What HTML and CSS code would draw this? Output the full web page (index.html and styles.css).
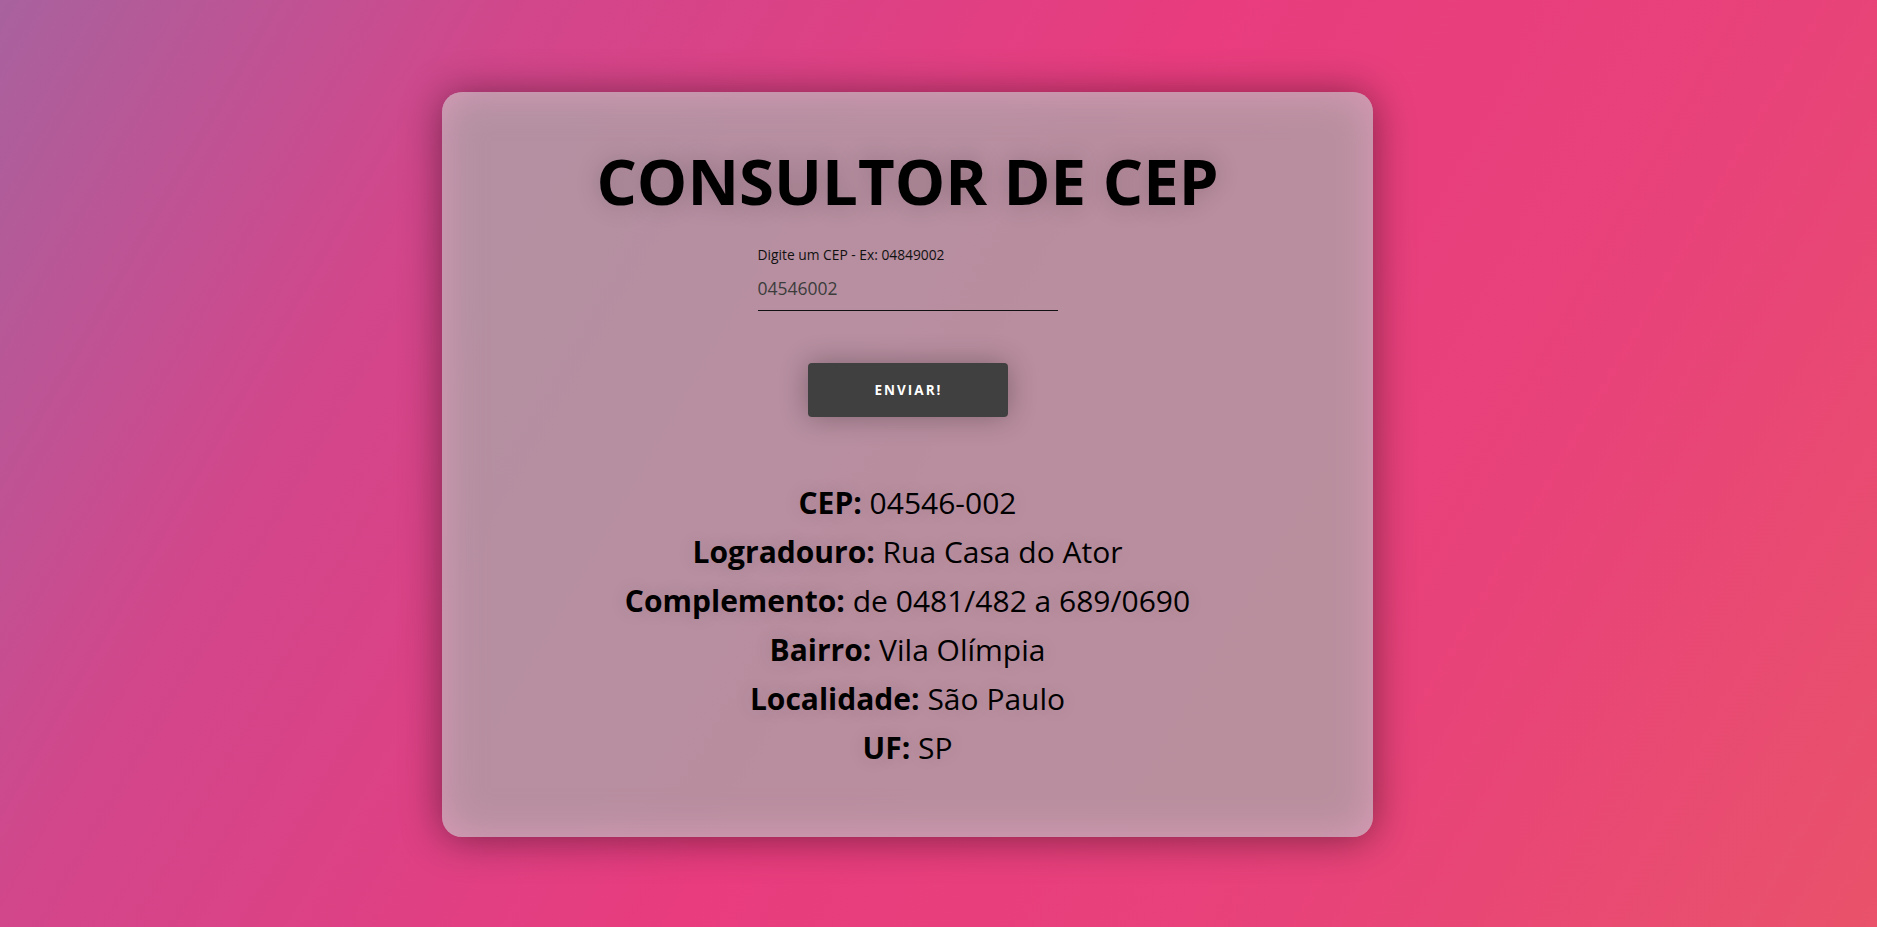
FILE: index.html
```html
<!DOCTYPE html>
<html lang="pt-BR">
<head>
<meta charset="utf-8">
<title>Consultor de CEP</title>
<link rel="stylesheet" href="styles.css">
</head>
<body>
<main class="page">
  <section class="card">
    <h1 class="title">CONSULTOR DE CEP</h1>
    <form class="form">
      <label class="field">
        <span class="field-label">Digite um CEP - Ex: 04849002</span>
        <input class="field-input" type="text" value="04546002">
      </label>
      <button class="btn" type="button">Enviar!</button>
    </form>
    <div class="result">
      <p class="row"><strong>CEP:</strong> 04546-002</p>
      <p class="row"><strong>Logradouro:</strong> Rua Casa do Ator</p>
      <p class="row"><strong>Complemento:</strong> de 0481/482 a 689/0690</p>
      <p class="row"><strong>Bairro:</strong> Vila Olímpia</p>
      <p class="row"><strong>Localidade:</strong> São Paulo</p>
      <p class="row"><strong>UF:</strong> SP</p>
    </div>
  </section>
</main>
</body>
</html>
```

FILE: styles.css
```css
html, body {
  margin: 0;
  padding: 0;
}

body {
  min-height: 100vh;
  font-family: "Open Sans", "Noto Sans", sans-serif;
  color: #000;
  background: linear-gradient(120deg, #a8629e 0%, #d2468b 22%, #e83c7e 50%, #e8427a 75%, #e9526a 100%);
  overflow: hidden;
}

.page {
  box-sizing: border-box;
  min-height: 100vh;
  display: flex;
  justify-content: center;
  align-items: flex-start;
  padding: 92px 62px 0 0;
}

.card {
  box-sizing: border-box;
  width: 931px;
  padding: 50px 0 65px;
  border-radius: 20px;
  background: rgba(170, 168, 170, 0.76);
  box-shadow: 0 2px 40px rgba(0, 0, 0, 0.45), inset 0 0 40px rgba(240, 165, 200, 0.6);
  display: flex;
  flex-direction: column;
  align-items: center;
}

.title {
  margin: 0;
  font-size: 63.5px;
  font-weight: 700;
  line-height: 78px;
  color: #000;
  text-shadow: 0 0 25px rgba(0, 0, 0, 0.22);
}

.form {
  margin: 25px 0 0;
  display: flex;
  flex-direction: column;
  align-items: center;
}

.field {
  width: 300px;
  display: flex;
  flex-direction: column;
  gap: 6px;
}

.field-label {
  font-size: 13.8px;
  line-height: 19px;
  color: #111;
}

.field-input {
  box-sizing: border-box;
  width: 100%;
  margin: 0;
  padding: 6px 0 10px;
  border: 0;
  border-bottom: 1px solid #111;
  background: transparent;
  font-family: "Open Sans", "Noto Sans", sans-serif;
  font-size: 17.5px;
  line-height: 24px;
  color: #3c3c3c;
  outline: none;
}

.btn {
  margin-top: 52px;
  width: 200px;
  height: 54px;
  padding: 0 0 0 2px;
  border: 0;
  border-radius: 4px;
  background: #404040;
  color: #fff;
  font-family: "Open Sans", "Noto Sans", sans-serif;
  font-size: 13.5px;
  font-weight: 700;
  letter-spacing: 2px;
  text-transform: uppercase;
  box-shadow: 0 0 28px rgba(0, 0, 0, 0.3);
  cursor: pointer;
}

.result {
  margin-top: 61px;
  text-align: center;
  font-size: 30px;
  line-height: 49px;
  color: #000;
  text-shadow: 0 0 20px rgba(0, 0, 0, 0.12);
}

.row {
  margin: 0;
}

.row strong {
  font-weight: 700;
}
```
